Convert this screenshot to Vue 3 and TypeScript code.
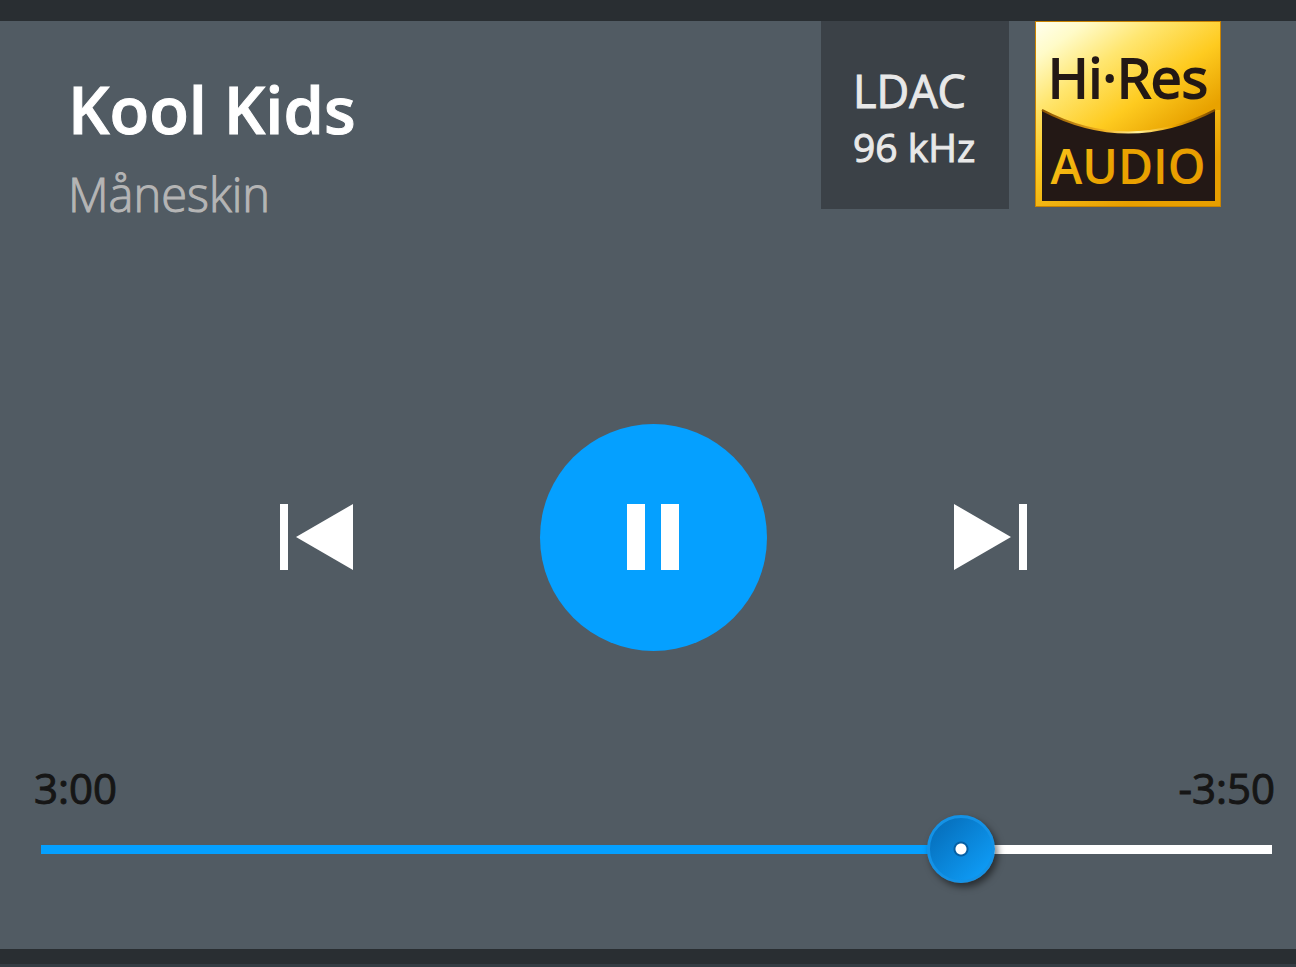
<script setup lang="ts">
import { computed, ref } from 'vue'

interface Track {
  title: string
  artist: string
  codec: string
  rate: string
  elapsed: string
  remaining: string
}

const track: Track = {
  title: 'Kool Kids',
  artist: 'Måneskin',
  codec: 'LDAC',
  rate: '96 kHz',
  elapsed: '3:00',
  remaining: '-3:50',
}

const playing = ref(true)
const position = ref(762)
const fill = computed(() => ({ '--fill': `${position.value / 10}%` }))
</script>

<template>
  <div class="player">
    <header class="top">
      <div class="titles">
        <h1>{{ track.title }}</h1>
        <p>{{ track.artist }}</p>
      </div>
      <div class="badges">
        <div class="codec">
          <span class="codec-name">{{ track.codec }}</span>
          <span class="codec-rate">{{ track.rate }}</span>
        </div>
        <svg class="hires" viewBox="0 0 186 186" role="img" aria-label="Hi-Res Audio">
          <defs>
            <linearGradient id="gold" gradientUnits="userSpaceOnUse" x1="0" y1="0" x2="100" y2="140">
              <stop offset="0" stop-color="#fffff0" />
              <stop offset="0.18" stop-color="#fffbc8" />
              <stop offset="0.42" stop-color="#ffe670" />
              <stop offset="0.72" stop-color="#fecb20" />
              <stop offset="1" stop-color="#e8a200" />
            </linearGradient>
            <linearGradient id="frame" gradientUnits="userSpaceOnUse" x1="0" y1="85" x2="60" y2="200">
              <stop offset="0" stop-color="#ffe36a" />
              <stop offset="0.4" stop-color="#fccb24" />
              <stop offset="1" stop-color="#e79f00" />
            </linearGradient>
            <linearGradient id="rim" x1="0" y1="0" x2="1" y2="0">
              <stop offset="0" stop-color="#8a5200" />
              <stop offset="0.35" stop-color="#f0b020" />
              <stop offset="0.55" stop-color="#fff2a0" />
              <stop offset="0.75" stop-color="#f0a800" />
              <stop offset="1" stop-color="#7a4700" />
            </linearGradient>
            <linearGradient id="word" x1="0" y1="0" x2="1" y2="0.3">
              <stop offset="0" stop-color="#fcc81e" />
              <stop offset="0.5" stop-color="#eaa300" />
              <stop offset="1" stop-color="#e89e00" />
            </linearGradient>
          </defs>
          <rect width="186" height="186" fill="url(#frame)" />
          <path d="M0 0H186V89H180Q93 134 7 89H0Z" fill="url(#gold)" />
          <path d="M7 89Q93 134 180 89V180H7Z" fill="#231815" />
          <path d="M7 89Q93 134 180 89" fill="none" stroke="url(#rim)" stroke-width="2" />
          <rect x="0.5" y="0.5" width="185" height="185" fill="none" stroke="#c98300" />
          <text class="hires-top" x="93" y="77" text-anchor="middle">Hi·Res</text>
          <text class="hires-bottom" x="93" y="163" text-anchor="middle" fill="url(#word)">AUDIO</text>
        </svg>
      </div>
    </header>

    <main class="controls">
      <button type="button" class="skip" aria-label="Previous track">
        <svg viewBox="0 0 73 66" aria-hidden="true">
          <path d="M0 0H8V66H0ZM73 0V66L16 33Z" />
        </svg>
      </button>
      <button
        type="button"
        class="play"
        :aria-label="playing ? 'Pause' : 'Play'"
        @click="playing = !playing"
      >
        <svg viewBox="0 0 53 66" aria-hidden="true">
          <path v-if="playing" d="M0 0H18V66H0ZM34 0H52V66H34Z" />
          <path v-else d="M0 0V66L52 33Z" />
        </svg>
      </button>
      <button type="button" class="skip" aria-label="Next track">
        <svg viewBox="0 0 73 66" aria-hidden="true">
          <path d="M0 0V66L57 33ZM65 0H73V66H65Z" />
        </svg>
      </button>
    </main>

    <footer class="progress">
      <div class="times">
        <span>{{ track.elapsed }}</span>
        <span>{{ track.remaining }}</span>
      </div>
      <input
        v-model.number="position"
        class="seek"
        type="range"
        min="0"
        max="1000"
        aria-label="Playback position"
        :style="fill"
      />
    </footer>
  </div>
</template>

<style>
body {
  margin: 0;
  background: #515b63;
}
</style>

<style scoped>
.player {
  box-sizing: border-box;
  display: flex;
  flex-direction: column;
  min-height: 100vh;
  border-top: 21px solid #292e32;
  border-bottom: 3px solid #343c43;
  background: #515b63;
  font-family: 'Open Sans', 'Noto Sans', sans-serif;
}

.player::after {
  content: '';
  height: 15px;
  background: #292e32;
}

.top {
  display: flex;
  justify-content: space-between;
  align-items: flex-start;
  padding: 0 75px 0 68px;
}

.titles {
  padding-top: 40px;
}

h1 {
  margin: 0;
  color: #fff;
  font-size: 65px;
  font-weight: 600;
  line-height: 96px;
  -webkit-text-stroke: 1px #fff;
}

p {
  margin: 0;
  color: #b5b5b5;
  font-size: 47px;
  font-weight: 300;
  line-height: 74px;
  -webkit-text-stroke: 1px #b5b5b5;
}

.badges {
  display: flex;
  gap: 26px;
}

.codec {
  box-sizing: border-box;
  display: flex;
  flex-direction: column;
  width: 188px;
  height: 188px;
  padding: 42px 0 0 32px;
  background: #3b4147;
  color: #e8e8e8;
  -webkit-text-stroke: 1px #e8e8e8;
}

.codec-name {
  font-size: 45px;
  line-height: 56px;
}

.codec-rate {
  font-size: 39px;
  line-height: 56px;
}

.hires {
  display: block;
  width: 186px;
  height: 186px;
}

.hires-top {
  fill: #231815;
  stroke: #231815;
  stroke-width: 2px;
  font-size: 55px;
}

.hires-bottom {
  font-size: 48px;
  font-weight: 600;
}

.controls {
  flex: 1;
  display: flex;
  align-items: center;
  justify-content: center;
  gap: 187px;
  padding: 82px 0 0 11px;
}

button {
  display: flex;
  align-items: center;
  justify-content: center;
  padding: 0;
  border: 0;
  background: none;
  cursor: pointer;
}

button svg {
  display: block;
  height: 66px;
  fill: #fff;
}

.play {
  width: 227px;
  height: 227px;
  border-radius: 50%;
  background: #05a0ff;
}

.progress {
  padding: 0 24px 66px 41px;
}

.times {
  display: flex;
  justify-content: space-between;
  margin: 0 -3px 0 -7px;
  color: #161616;
  font-size: 42px;
  line-height: 54px;
  -webkit-text-stroke: 1px #161616;
}

.seek {
  appearance: none;
  display: block;
  width: 100%;
  height: 68px;
  margin: 0;
  background: linear-gradient(to right, #05a0ff var(--fill), #fff var(--fill)) center / 100% 9px no-repeat;
  cursor: pointer;
}

.seek::-webkit-slider-thumb {
  appearance: none;
  box-sizing: border-box;
  width: 68px;
  height: 68px;
  border: 3px solid #1492e6;
  border-radius: 50%;
  background:
    radial-gradient(circle, #fff 0 5px, #0560a5 6px 7px, transparent 8px),
    linear-gradient(135deg, #0670bd 15%, #0e9bf5 85%);
  background-origin: border-box;
  box-shadow: 3px 4px 7px rgb(0 0 0 / 50%);
}
</style>
